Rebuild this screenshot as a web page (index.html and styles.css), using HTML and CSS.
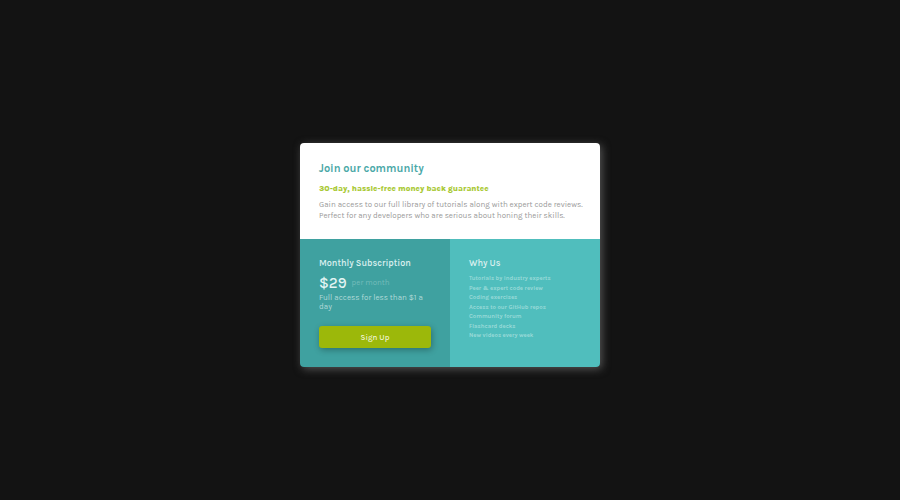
FILE: index.html
```html
<!DOCTYPE html>
<html lang="en">
<head>
    <meta charset="UTF-8">
    <meta name="viewport" content="width=device-width, initial-scale=1.0">
    <title>Single Price Grid</title>
    <link rel="stylesheet" href="styles.css">
</head>
<body>
<main class="card">
    <section class="join">
        <h1>Join our community</h1>
        <h2>30-day, hassle-free money back guarantee</h2>
        <p>Gain access to our full library of tutorials along with expert code reviews. Perfect for any developers who are serious about honing their skills.</p>
    </section>
    <section class="subscription">
        <h3>Monthly Subscription</h3>
        <div class="price">
            <span class="amount">$29</span>
            <span class="period">per month</span>
        </div>
        <p>Full access for less than $1 a day</p>
        <button type="button">Sign Up</button>
    </section>
    <section class="why-us">
        <h3>Why Us</h3>
        <ul>
            <li>Tutorials by industry experts</li>
            <li>Peer &amp; expert code review</li>
            <li>Coding exercises</li>
            <li>Access to our GitHub repos</li>
            <li>Community forum</li>
            <li>Flashcard decks</li>
            <li>New videos every week</li>
        </ul>
    </section>
</main>
</body>
</html>
```

FILE: styles.css
```css
* {
    box-sizing: border-box;
    margin: 0;
    padding: 0;
}
body {
    min-height: 100vh;
    padding-top: 10px;
    display: flex;
    align-items: center;
    justify-content: center;
    background-color: #131313;
    font-family: Karla, Inter, sans-serif;
}
.card {
    width: 90%;
    max-width: 300px;
    display: grid;
    grid-template-columns: 1fr 1fr;
    border-radius: 4px;
    overflow: hidden;
    box-shadow: 2px 2px 8px #555;
}
.join {
    grid-column: 1 / 3;
    padding: 20px 12px 18px 19px;
    background-color: #fff;
}
h1 {
    font-size: 11px;
    line-height: 12px;
    font-weight: 700;
    color: #4aa8a7;
}
h2 {
    margin-top: 9px;
    font-size: 8px;
    line-height: 10px;
    font-weight: 800;
    color: #a9c935;
}
.join p {
    margin-top: 5px;
    font-size: 8px;
    line-height: 11px;
    font-weight: 400;
    color: #999;
}
.subscription {
    padding: 18px 19px 19px;
    background-color: #3fa1a0;
}
.why-us {
    display: flex;
    flex-direction: column;
    padding: 18px 19px 27px;
    background-color: #50bebd;
}
h3 {
    font-size: 9px;
    line-height: 12px;
    font-weight: 600;
    color: #d8efee;
}
.price {
    display: flex;
    align-items: center;
    gap: 5px;
    margin-top: 6px;
    line-height: 16px;
}
.amount {
    font-size: 15px;
    font-weight: 500;
    color: #e4f5f4;
}
.period {
    font-size: 8px;
    color: #74bcba;
}
.subscription p {
    margin-top: 2px;
    padding-right: 8px;
    font-size: 8px;
    line-height: 9px;
    color: #b2dad8;
}
button {
    width: 100%;
    height: 22px;
    margin-top: 15px;
    border: none;
    border-radius: 3px;
    background-color: #9cb80a;
    box-shadow: 1px 2px 6px rgba(0, 0, 0, 0.3);
    color: #f2f6dc;
    font-family: inherit;
    font-size: 8px;
    font-weight: 500;
    cursor: pointer;
}
ul {
    flex: 1;
    display: flex;
    flex-direction: column;
    justify-content: space-between;
    margin-top: 5px;
    list-style: none;
}
li {
    font-size: 6px;
    line-height: 9px;
    font-weight: 700;
    color: #99dad8;
}
```
